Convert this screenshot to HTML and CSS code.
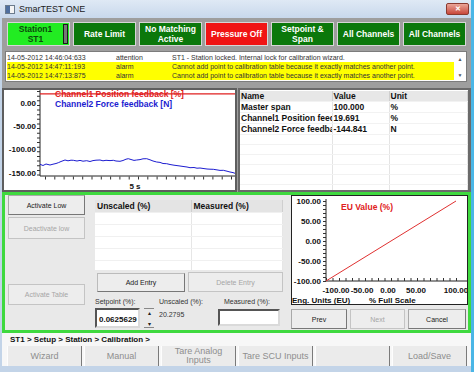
FILE: index.html
```html
<!DOCTYPE html>
<html>
<head>
	<title>SmarTEST ONE</title>
	<link rel="stylesheet" href="styles.css">
</head>
<body>
<div class="window">
	<div class="titlebar">
		<span class="appicon"></span>
		<span class="title">SmarTEST ONE</span>
		<span class="close">&#x2715;</span>
	</div>
	<div class="client">
		<div class="toolbar">
			<div class="tbtn lime">Station1<br>ST1<span class="lock"></span></div>
			<div class="tbtn">Rate Limit</div>
			<div class="tbtn">No Matching<br>Active</div>
			<div class="tbtn red">Pressure Off</div>
			<div class="tbtn">Setpoint &amp;<br>Span</div>
			<div class="tbtn">All Channels</div>
			<div class="tbtn">All Channels</div>
		</div>

		<div class="log">
			<div class="log-rows">
				<div class="logrow"><span class="c-date">14-05-2012 14:46:04:633</span><span class="c-lvl">attention</span><span>ST1 - Station locked. Internal lock for calibration wizard.</span></div>
				<div class="logrow alarm"><span class="c-date">14-05-2012 14:47:11:193</span><span class="c-lvl">alarm</span><span>Cannot add point to calibration table because it exactly matches another point.</span></div>
				<div class="logrow alarm"><span class="c-date">14-05-2012 14:47:13:875</span><span class="c-lvl">alarm</span><span>Cannot add point to calibration table because it exactly matches another point.</span></div>
			</div>
			<div class="scroll"><span>&#x25B2;</span><span>&#x25BC;</span></div>
		</div>

		<div class="mid">
			<div class="chart">
				<svg width="231" height="100" viewBox="0 0 231 100">
					<line x1="36" y1="0" x2="36" y2="86" stroke="#222" stroke-width="1"/>
					<line x1="36" y1="86" x2="231" y2="86" stroke="#222" stroke-width="1"/>
					<line x1="34.5" y1="1" x2="34.5" y2="86" stroke="#333" stroke-width="3" stroke-dasharray="1 3.64"/>
					<line x1="41" y1="88" x2="231" y2="88" stroke="#333" stroke-width="3" stroke-dasharray="1 8.3"/>
					<text class="ax" x="32" y="16" text-anchor="end">0.00</text>
					<text class="ax" x="32" y="39" text-anchor="end">-50.00</text>
					<text class="ax" x="32" y="62" text-anchor="end">-100.00</text>
					<text class="ax" x="32" y="86" text-anchor="end">-150.00</text>
					<text class="ax" x="131" y="99" text-anchor="middle">5 s</text>
					<text class="lg red" x="51" y="6.5">Channel1 Position feedback [%]</text>
					<text class="lg blue" x="51" y="17">Channel2 Force feedback [N]</text>
					<line x1="36" y1="3.8" x2="231" y2="3.8" stroke="#e02020" stroke-width="1.2"/>
					<polyline fill="none" stroke="#1c1cd0" stroke-width="1" points="36,74.3 39,75.5 42,74 46,75 49,74.2 52,73.5 54.3,72.7 57,71.5 61,70 64,70.8 67,70.2 69.3,70.3 73,71 76,70.4 79,71.2 82.7,70.7 86,71.5 89,70.6 92,70.2 96,70 99,70.8 102,70.3 106,70.6 109.3,70.3 112,71 116,71.3 119,70.5 122,69.2 124.3,68.7 127,69.5 130,70.4 132.7,70 136,69.6 139,68.8 142.7,68.7 146,69.8 149,71 152.7,72 156,72.4 159,73.5 162.7,73.7 166,74.5 170,75.2 173,75.6 176,76 180,76.6 183,77 186,77.7 190,77.5 193,78.2 196,78 200,78.6 203,79 206,79.2 209.3,79.3 213,79.9 216,80.4 219.3,80.3 223,81.2 226,82 229,82.6 231,83.3"/>
				</svg>
			</div>
			<div class="grid">
				<table class="values">
					<colgroup><col style="width:92px"><col style="width:57px"><col></colgroup>
					<tr><th>Name</th><th>Value</th><th>Unit</th></tr>
					<tr><td>Master span</td><td>100.000</td><td>%</td></tr>
					<tr><td>Channel1 Position feedback</td><td>19.691</td><td>%</td></tr>
					<tr><td>Channel2 Force feedback</td><td>-144.841</td><td>N</td></tr>
					<tr><td></td><td></td><td></td></tr>
					<tr><td></td><td></td><td></td></tr>
					<tr><td></td><td></td><td></td></tr>
					<tr><td></td><td></td><td></td></tr>
					<tr><td></td><td></td><td></td></tr>
					<tr><td></td><td></td><td></td></tr>
				</table>
			</div>
		</div>

		<div class="cal">
			<div class="cal-left">
				<div class="btn act-low">Activate Low</div>
				<div class="btn off deact">Deactivate low</div>
				<div class="btn off act-table">Activate Table</div>
			</div>
			<div class="cal-mid">
				<div class="caltable">
					<table class="points">
						<colgroup><col style="width:96px"><col></colgroup>
						<tr><th>Unscaled (%)</th><th>Measured (%)</th></tr>
						<tr><td></td><td></td></tr>
						<tr><td></td><td></td></tr>
						<tr><td></td><td></td></tr>
						<tr><td></td><td></td></tr>
						<tr><td></td><td></td></tr>
					</table>
				</div>
				<div class="entry-row">
					<div class="btn add">Add Entry</div>
					<div class="btn off del">Delete Entry</div>
				</div>
				<div class="labels">
					<span class="l-set">Setpoint (%):</span>
					<span class="l-uns">Unscaled (%):</span>
					<span class="l-mea">Measured (%):</span>
				</div>
				<div class="fields">
					<div class="field setpoint">0.0625629</div>
					<div class="spin"><span>&#x25B4;</span><span>&#x25BE;</span></div>
					<div class="unsval">20.2795</div>
					<div class="field measured"></div>
				</div>
			</div>
			<div class="cal-right">
				<div class="euchart">
					<svg width="176" height="108" viewBox="0 0 176 108">
						<line x1="34" y1="3" x2="34" y2="85" stroke="#222" stroke-width="1"/>
						<line x1="34" y1="85" x2="176" y2="85" stroke="#222" stroke-width="1"/>
						<line x1="32.5" y1="5" x2="32.5" y2="86" stroke="#333" stroke-width="3" stroke-dasharray="1 3"/>
						<line x1="34" y1="83.5" x2="170" y2="83.5" stroke="#333" stroke-width="3" stroke-dasharray="1 5.5"/>
						<text class="ax" x="29" y="8" text-anchor="end">100.00</text>
						<text class="ax" x="29" y="28" text-anchor="end">50.00</text>
						<text class="ax" x="29" y="48" text-anchor="end">0.00</text>
						<text class="ax" x="29" y="68" text-anchor="end">-50.00</text>
						<text class="ax" x="29" y="88" text-anchor="end">-100.00</text>
						<text class="ax" x="44" y="97" text-anchor="middle">-100.00</text>
						<text class="ax" x="70" y="97" text-anchor="middle">-50.00</text>
						<text class="ax" x="96" y="97" text-anchor="middle">0.00</text>
						<text class="ax" x="124" y="97" text-anchor="middle">50.00</text>
						<text class="ax" x="164" y="97" text-anchor="middle">100.00</text>
						<text class="ax" x="0" y="107">Eng. Units (EU)</text>
						<text class="ax" x="77" y="107">% Full Scale</text>
						<text class="lg red" x="49" y="14">EU Value (%)</text>
						<line x1="34" y1="85" x2="164" y2="5" stroke="#e03030" stroke-width="1"/>
					</svg>
				</div>
				<div class="wiz-row">
					<div class="btn prev">Prev</div>
					<div class="btn off next">Next</div>
					<div class="btn cancel">Cancel</div>
				</div>
			</div>
		</div>

		<div class="crumb">ST1 &gt; Setup &gt; Station &gt; Calibration &gt;</div>
		<div class="nav">
			<div class="nbtn">Wizard</div>
			<div class="nbtn">Manual</div>
			<div class="nbtn">Tare Analog<br>Inputs</div>
			<div class="nbtn">Tare SCU Inputs</div>
			<div class="nbtn"></div>
			<div class="nbtn">Load/Save</div>
		</div>
	</div>
</div>
</body>
</html>
```

FILE: styles.css
```css
* {
	box-sizing: border-box;
}
body {
	margin: 0;
	font-family: "Liberation Sans", Arial, sans-serif;
	overflow: hidden;
}
.window {
	width: 474px; height: 372px;
	background: #c3d4e8;
	border-right: 3px solid #4ab6e6;
	display: flex; flex-direction: column;
	overflow: hidden;
}
.titlebar {
	height: 18px;
	display: flex; align-items: center;
	padding: 0 2px 0 5px;
	background: linear-gradient(#dfe9f5, #c8d8ec);
}
.appicon {
	width: 10px; height: 9px;
	border: 1px solid #6b7b8c;
	background: linear-gradient(90deg, #4f6f9f 45%, #f4f4f4 45%);
	margin-right: 4px;
}
.title {
	flex: 1;
	font-size: 9px; color: #1b1b1b;
}
.close {
	width: 23px; height: 12px;
	border: 1px solid #8a3a30; border-radius: 2px;
	background: linear-gradient(#eaa598, #c8473b);
	color: #fff; font-size: 7px; font-weight: bold;
	display: flex; align-items: center; justify-content: center;
}

.client {
	flex: 1;
	margin: 0 0 6px 2px;
	background: #9e9e9e;
	display: flex; flex-direction: column;
}

/* status buttons */
.toolbar {
	height: 31px;
	display: flex; gap: 3px;
	padding: 4px 0 0 5px;
}
.tbtn {
	width: 63px; height: 24px;
	border: 1px solid #d6d6d6;
	background: #0b780b;
	color: #fff; font-size: 8.5px; font-weight: bold;
	line-height: 10px; text-align: center;
	display: flex; align-items: center; justify-content: center;
}
.tbtn.lime {
	background: #22ec22; color: #0b4a0b;
	padding-right: 6px;
	position: relative;
}
.tbtn.red {
	background: #f01414;
}
.lock {
	position: absolute;
	right: 1px; top: 1px;
	width: 5px; height: 20px;
	border: 1px solid #1a1a1a;
	background: #777;
}

/* message log */
.log {
	height: 31px;
	margin: 2px 4px 0 3px;
	background: #fff;
	border: 1px solid #7c7c7c;
	display: flex;
}
.log-rows {
	flex: 1;
	padding: 1px 0 0 1px;
}
.logrow {
	height: 9px;
	display: flex;
	font-size: 7px; line-height: 9px; color: #333;
	white-space: nowrap;
}
.logrow.alarm {
	background: #ffff00;
}
.c-date { width: 109px; }
.c-lvl { width: 56px; }
.scroll {
	width: 12px;
	display: flex; flex-direction: column; justify-content: space-between;
	align-items: center;
	font-size: 5px; color: #555;
	padding: 4px 0 3px;
}

/* chart + values */
.mid {
	height: 104px;
	margin-top: 6px;
	display: flex;
}
.chart {
	width: 235px;
	background: #fff;
	border: 2px solid #5e5e5e;
}
.chart svg, .euchart svg {
	display: block;
}
.ax {
	font: bold 8px "Liberation Sans", Arial, sans-serif;
	fill: #111;
}
.lg {
	font: bold 8.5px "Liberation Sans", Arial, sans-serif;
}
.lg.red { fill: #e02020; }
.lg.blue { fill: #1c1cd0; }

.grid {
	flex: 1;
	background: #fff;
	border: 2px solid #6a6a6a;
	border-right-width: 3px;
	margin-left: 1px;
	padding-top: 1px;
	overflow: hidden;
}
table {
	width: 100%;
	border-collapse: collapse;
	table-layout: fixed;
}
.values {
	font: bold 8.5px "Liberation Sans", Arial, sans-serif;
	color: #111;
}
.values th, .values td {
	height: 10px;
	padding: 0 1px;
	text-align: left;
	white-space: nowrap; overflow: hidden;
	border-right: 1px solid #e4e4e4;
	border-bottom: 1px solid #f2f2f2;
}
.values th {
	background: #e7e7e7;
	border-right-color: #cfcfcf;
}

/* calibration wizard */
.cal {
	height: 141px;
	border: 3px solid #3fd93f;
	background: #e9e9e9;
	display: grid;
	grid-template-columns: 77px 190px 177px;
	column-gap: 8px;
	padding-left: 3px;
}
.btn {
	background: #ededed;
	border: 1px solid #a9a9a9;
	border-right-color: #777; border-bottom-color: #777;
	font-size: 7px; color: #222;
	display: flex; align-items: center; justify-content: center;
}
.btn.off {
	color: #a6a6a6;
	border-color: #c4c4c4;
}
.cal-left {
	display: flex; flex-direction: column;
}
.act-low { height: 20px; }
.deact { height: 22px; margin-top: 2px; }
.act-table { height: 21px; margin-top: 45px; }

.cal-mid {
	display: flex; flex-direction: column;
	padding-left: 2px;
}
.caltable {
	height: 70px;
	margin-top: 5px;
	background: #fff;
	overflow: hidden;
}
.points {
	font: bold 8.5px "Liberation Sans", Arial, sans-serif;
	color: #111;
}
.points th, .points td {
	height: 12px;
	padding: 0 2px;
	text-align: left;
	border-right: 1px solid #e6e6e6;
	border-bottom: 1px solid #f0f0f0;
}
.points th {
	background: #e4e4e4;
	border-right-color: #cfcfcf;
}
.entry-row {
	display: flex; gap: 3px;
	margin-top: 3px;
}
.add { width: 88px; height: 19px; margin-left: 2px; border-color: #777; border-left-color: #bbb; border-top-color: #bbb; }
.del { width: 95px; height: 20px; margin-top: -1px; }
.labels {
	height: 13px;
	display: flex;
	font-size: 7px; color: #333;
	align-items: flex-end;
}
.l-set { width: 64px; }
.l-uns { width: 65px; }
.fields {
	display: flex; align-items: flex-start;
	margin-top: 3px;
}
.field {
	height: 20px;
	background: #fff;
	border: 2px solid #dadada;
	border-top-color: #555; border-left-color: #555;
}
.setpoint {
	width: 45px;
	font: bold 8px "Liberation Sans", Arial, sans-serif; color: #111;
	padding: 5px 0 0 2px;
	white-space: nowrap;
}
.spin {
	width: 10px; height: 20px;
	margin-left: 4px;
	display: flex; flex-direction: column; justify-content: space-between;
	align-items: center;
	font-size: 6px; color: #222;
	border-top: 1px solid #888;
	border-bottom: 1px solid #888;
}
.unsval {
	width: 64px;
	font-size: 7px; color: #333;
	padding: 3px 0 0 5px;
}
.measured {
	width: 62px; height: 17px;
	margin-top: 1px;
}

.cal-right {
	display: flex; flex-direction: column;
}
.euchart {
	height: 110px;
	background: #fff;
	border: 1px solid #222;
	overflow: hidden;
}
.wiz-row {
	display: flex; gap: 3px;
	margin-top: 4px;
}
.prev { width: 56px; height: 20px; }
.next { width: 55px; height: 20px; }
.cancel { width: 58px; height: 20px; }

/* footer */
.crumb {
	height: 13px;
	background: #f7f7f7;
	font: bold 8px "Liberation Sans", Arial, sans-serif; color: #111;
	line-height: 13px;
	padding-left: 8px;
}
.nav {
	flex: 1;
	display: flex; gap: 2px;
	padding-left: 5px;
	background: #f7f7f7;
}
.nbtn {
	width: 75px;
	background: #ebebeb;
	border-right: 1px solid #7a7a7a;
	border-left: 1px solid #fdfdfd;
	font-size: 9px; color: #8e8e8e;
	line-height: 9px; text-align: center;
	display: flex; align-items: center; justify-content: center;
}
```
